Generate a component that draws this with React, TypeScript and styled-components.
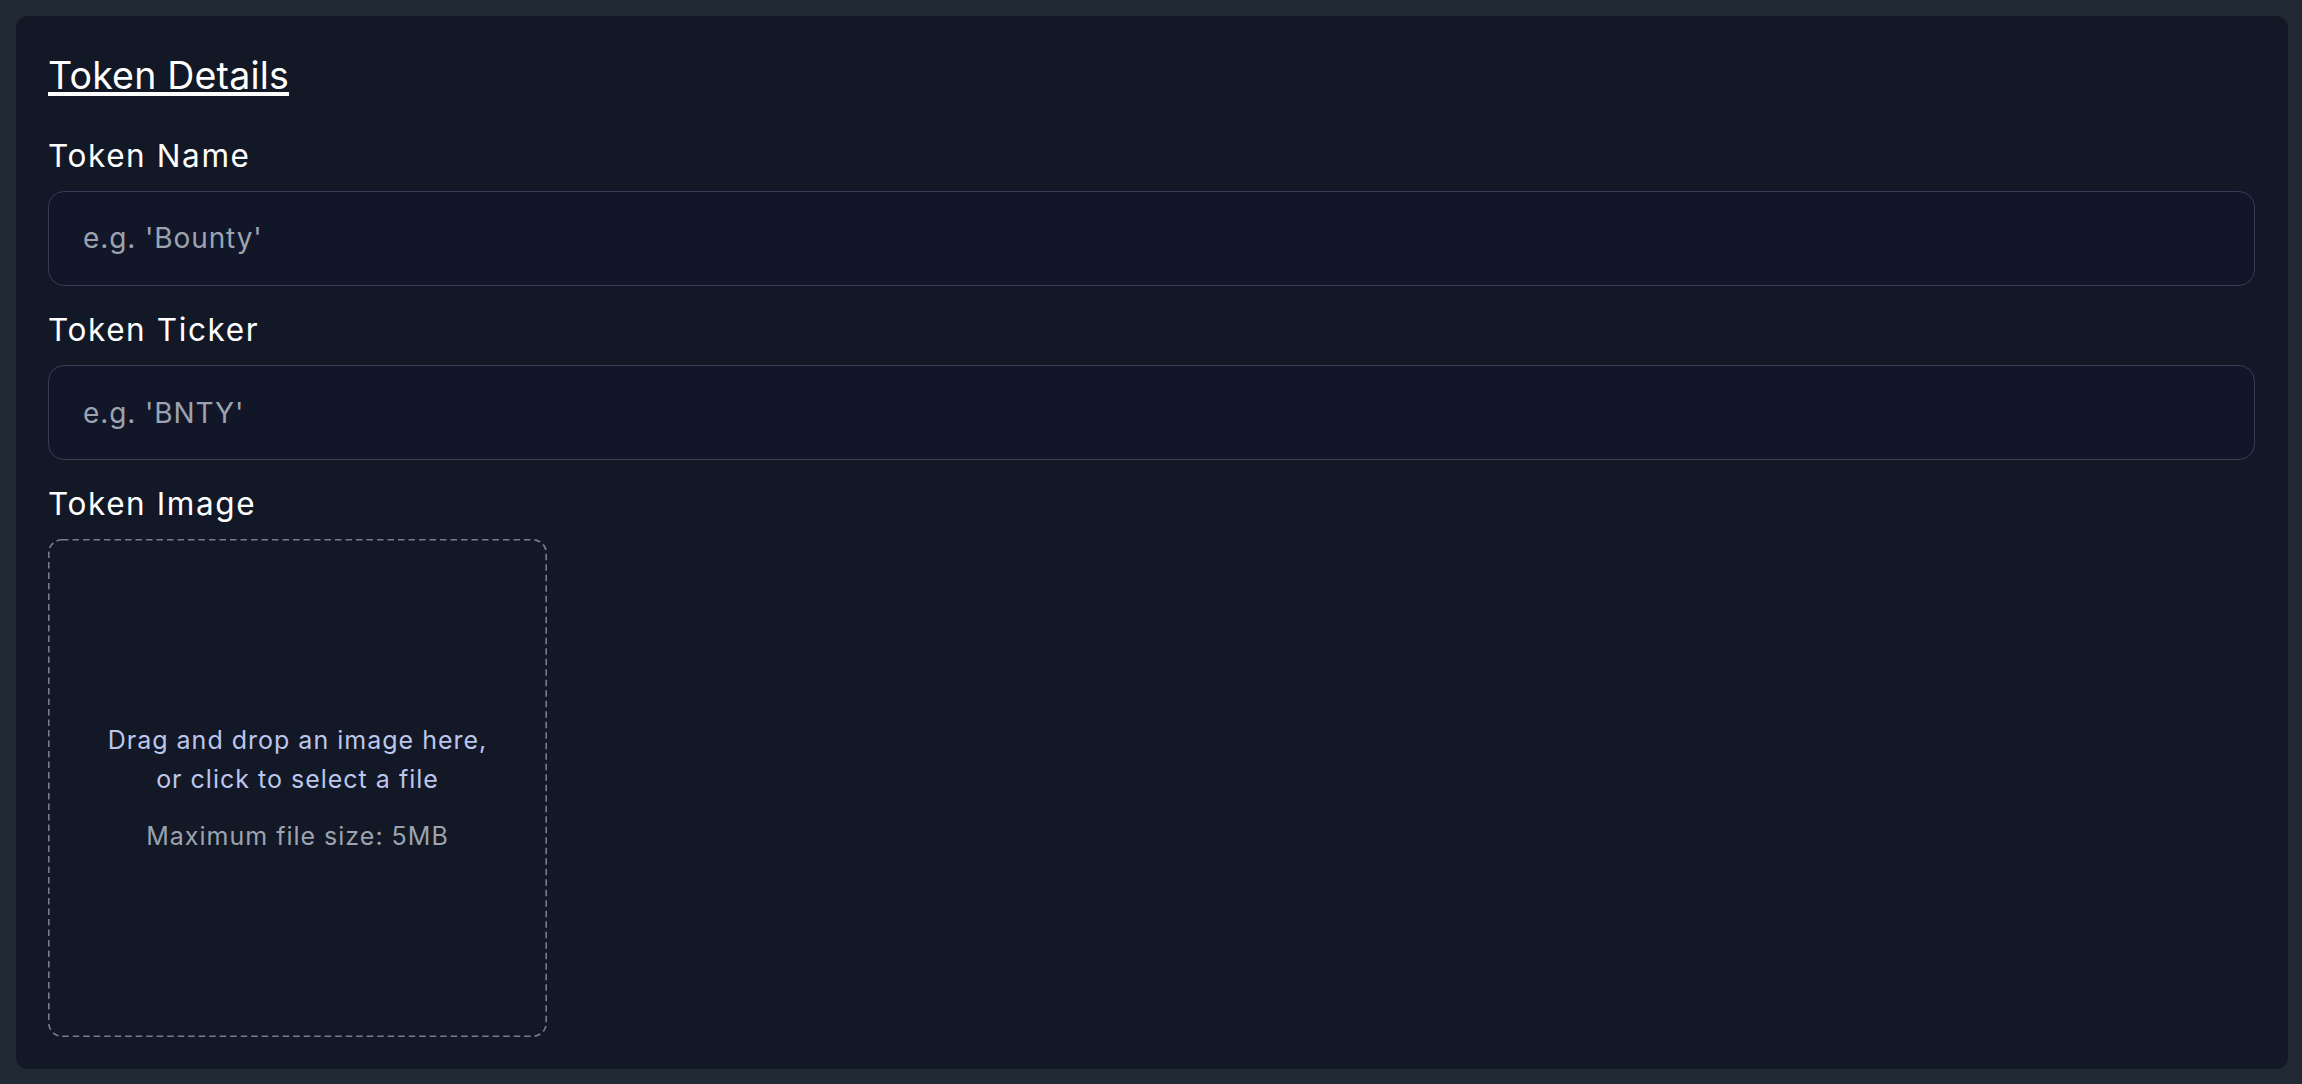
import React from "react";
import styled, { createGlobalStyle } from "styled-components";

const GlobalStyle = createGlobalStyle`
  html, body {
    margin: 0;
    padding: 0;
    background: #212935;
  }
  body {
    font-family: Inter, "Noto Sans", "Liberation Sans", sans-serif;
    -webkit-font-smoothing: antialiased;
  }
  * { box-sizing: border-box; }
`;

const dashSvg = encodeURIComponent(
  "<svg xmlns='http://www.w3.org/2000/svg' width='100%' height='100%'><rect width='100%' height='100%' fill='none' rx='14' ry='14' stroke='#767c89' stroke-width='3.2' stroke-dasharray='6.5,4' stroke-dashoffset='0'/></svg>"
);

const Page = styled.div`
  min-height: 1084px;
  padding: 16px 14px 15px 16px;
  background: #212935;
`;

const Card = styled.section`
  background: #121826;
  border-radius: 12px;
  padding: 32px 33px 32px 32px;
  display: flex;
  flex-direction: column;
`;

const Heading = styled.h2`
  margin: 0 0 29.5px 0;
  font-size: 37.5px;
  line-height: 56px;
  font-weight: 400;
  letter-spacing: 0.2px;
  color: #ffffff;
  text-decoration: underline;
  text-decoration-thickness: 3.5px;
  text-underline-offset: 3px;
  align-self: flex-start;
`;

const Field = styled.div<{ $last?: boolean }>`
  display: flex;
  flex-direction: column;
  margin-bottom: ${(p) => (p.$last ? "0" : "22px")};
`;

const Label = styled.label`
  display: block;
  font-size: 31.5px;
  line-height: 43.75px;
  font-weight: 400;
  letter-spacing: 1.6px;
  color: #ffffff;
  margin-bottom: 13.5px;
`;

const Input = styled.input`
  width: 100%;
  height: 95px;
  background: #111729;
  border: 1.5px solid #363d57;
  border-radius: 16px;
  padding: 0 34px;
  font-family: Inter, "Noto Sans", "Liberation Sans", sans-serif;
  font-size: 28px;
  letter-spacing: 0.9px;
  color: #ffffff;
  outline: none;
  &::placeholder {
    color: #9ca3af;
  }
`;

const DropZone = styled.div`
  width: 499px;
  height: 498px;
  border-radius: 14px;
  background-image: url("data:image/svg+xml,${dashSvg}");
  display: flex;
  flex-direction: column;
  align-items: center;
  justify-content: center;
  text-align: center;
  cursor: pointer;
`;

const DropText = styled.p`
  margin: 0;
  font-size: 25px;
  line-height: 39px;
  letter-spacing: 1px;
  color: #bcc6ec;
`;

const DropHint = styled.p`
  margin: 18px 0 0 0;
  font-size: 25px;
  line-height: 39px;
  letter-spacing: 1px;
  color: #9ca3af;
`;

export default function App() {
  return (
    <>
      <GlobalStyle />
      <Page>
        <Card>
          <Heading>Token Details</Heading>
          <Field>
            <Label>Token Name</Label>
            <Input placeholder="e.g. 'Bounty'" />
          </Field>
          <Field>
            <Label>Token Ticker</Label>
            <Input placeholder="e.g. 'BNTY'" />
          </Field>
          <Field $last>
            <Label>Token Image</Label>
            <DropZone>
              <DropText>
                Drag and drop an image here,
                <br />
                or click to select a file
              </DropText>
              <DropHint>Maximum file size: 5MB</DropHint>
            </DropZone>
          </Field>
        </Card>
      </Page>
    </>
  );
}
